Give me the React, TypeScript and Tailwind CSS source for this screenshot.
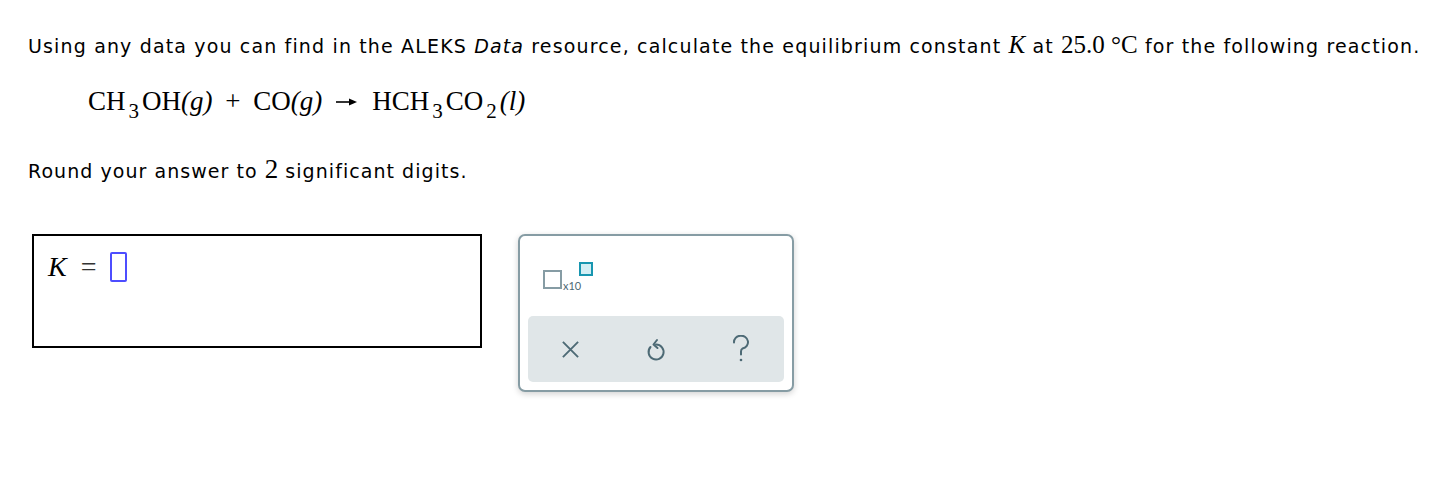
import React from 'react';

const sans = "font-['DejaVu_Sans','Verdana',sans-serif]";
const serif = "font-['Liberation_Serif','Times_New_Roman',serif]";

const Sub = ({ children }: { children: React.ReactNode }) => (
  <span className="text-[21px] relative top-[8px] mx-[3px] leading-none">{children}</span>
);

export default function App() {
  return (
    <div className={`w-[1448px] h-[486px] bg-white text-black ${sans}`}>
      <div className="pt-[33px] pl-[28px]">
        <p className="text-[19px] tracking-[1.15px] leading-[24px] whitespace-nowrap">
          Using any data you can find in the ALEKS <i>Data</i> resource, calculate the equilibrium constant{' '}
          <span className={`${serif} italic text-[25px] tracking-normal`}>K</span> at{' '}
          <span className={`${serif} text-[25px] tracking-normal`}>25.0 °C</span> for the following reaction.
        </p>

        <div className={`${serif} text-[27px] mt-[27px] ml-[60px] whitespace-nowrap leading-[32px]`}>
          CH<Sub>3</Sub>OH<i>(g)</i> <span className="mx-[6px]">+</span> CO<i>(g)</i>
          <span className="inline-block mx-[14px] relative -top-[3px]">
            <svg width="22" height="10" viewBox="0 0 22 10">
              <line x1="0" y1="5" x2="15" y2="5" stroke="#000" strokeWidth="1.6" />
              <path d="M13 1.5 L21 5 L13 8.5 Z" fill="#000" />
            </svg>
          </span>
          HCH<Sub>3</Sub>CO<Sub>2</Sub><i>(l)</i>
        </div>

        <p className="text-[19px] tracking-[1.05px] leading-[24px] mt-[40px] whitespace-nowrap">
          Round your answer to <span className={`${serif} text-[27px] tracking-normal`}>2</span> significant digits.
        </p>
      </div>

      <div className="flex items-start ml-[32px] mt-[51px] gap-[36px]">
        <div className="w-[450px] h-[114px] border-2 border-black flex items-start pt-[16px] pl-[14px]">
          <span className={`${serif} italic text-[28px] leading-[30px]`}>K</span>
          <span className={`${serif} text-[28px] leading-[30px] ml-[14px] text-[#333]`}>=</span>
          <span className="ml-[14px] w-[17px] h-[30px] border-2 border-[#4d4dff] rounded-[2px]" />
        </div>

        <div className="w-[276px] h-[158px] border-2 border-[#869ca4] rounded-[7px] bg-white shadow-[0_2px_6px_rgba(0,0,0,0.18)] p-[8px] flex flex-col">
          <div className="flex-1 relative">
            <div className="absolute left-[15px] top-[26px] w-[19px] h-[19px] border-[2.5px] border-[#869ca4] bg-white" />
            <span className="absolute left-[35px] top-[36px] text-[11px] leading-none text-[#4d6a75] font-['Lato',sans-serif]">x10</span>
            <div className="absolute left-[51px] top-[18px] w-[14px] h-[14px] border-2 border-[#1896b0] bg-[#d3eef4]" />
          </div>
          <div className="h-[66px] bg-[#e0e6e8] rounded-[5px] grid grid-cols-3 items-center justify-items-center text-[#4d6a75]">
            <svg width="19" height="19" viewBox="0 0 20 20" fill="none" stroke="currentColor" strokeWidth="2">
              <path d="M2 2 L18 18 M18 2 L2 18" />
            </svg>
            <svg width="22" height="26" viewBox="0 0 22 26" fill="none" stroke="currentColor" strokeWidth="2" strokeLinecap="round" strokeLinejoin="round">
              <path d="M5.5 11 A7.5 7.5 0 1 0 11 8.5" />
              <path d="M12 4 L8.5 8.5 L12.5 12" />
            </svg>
            <svg width="18" height="28" viewBox="0 0 18 28" fill="none" stroke="currentColor" strokeWidth="2" strokeLinecap="round">
              <path d="M2 7.5 A7 6.5 0 1 1 10.5 13.5 Q9 14.5 9 16.5 L9 19.5" />
              <circle cx="9" cy="25" r="1.3" fill="currentColor" stroke="none" />
            </svg>
          </div>
        </div>
      </div>
    </div>
  );
}
